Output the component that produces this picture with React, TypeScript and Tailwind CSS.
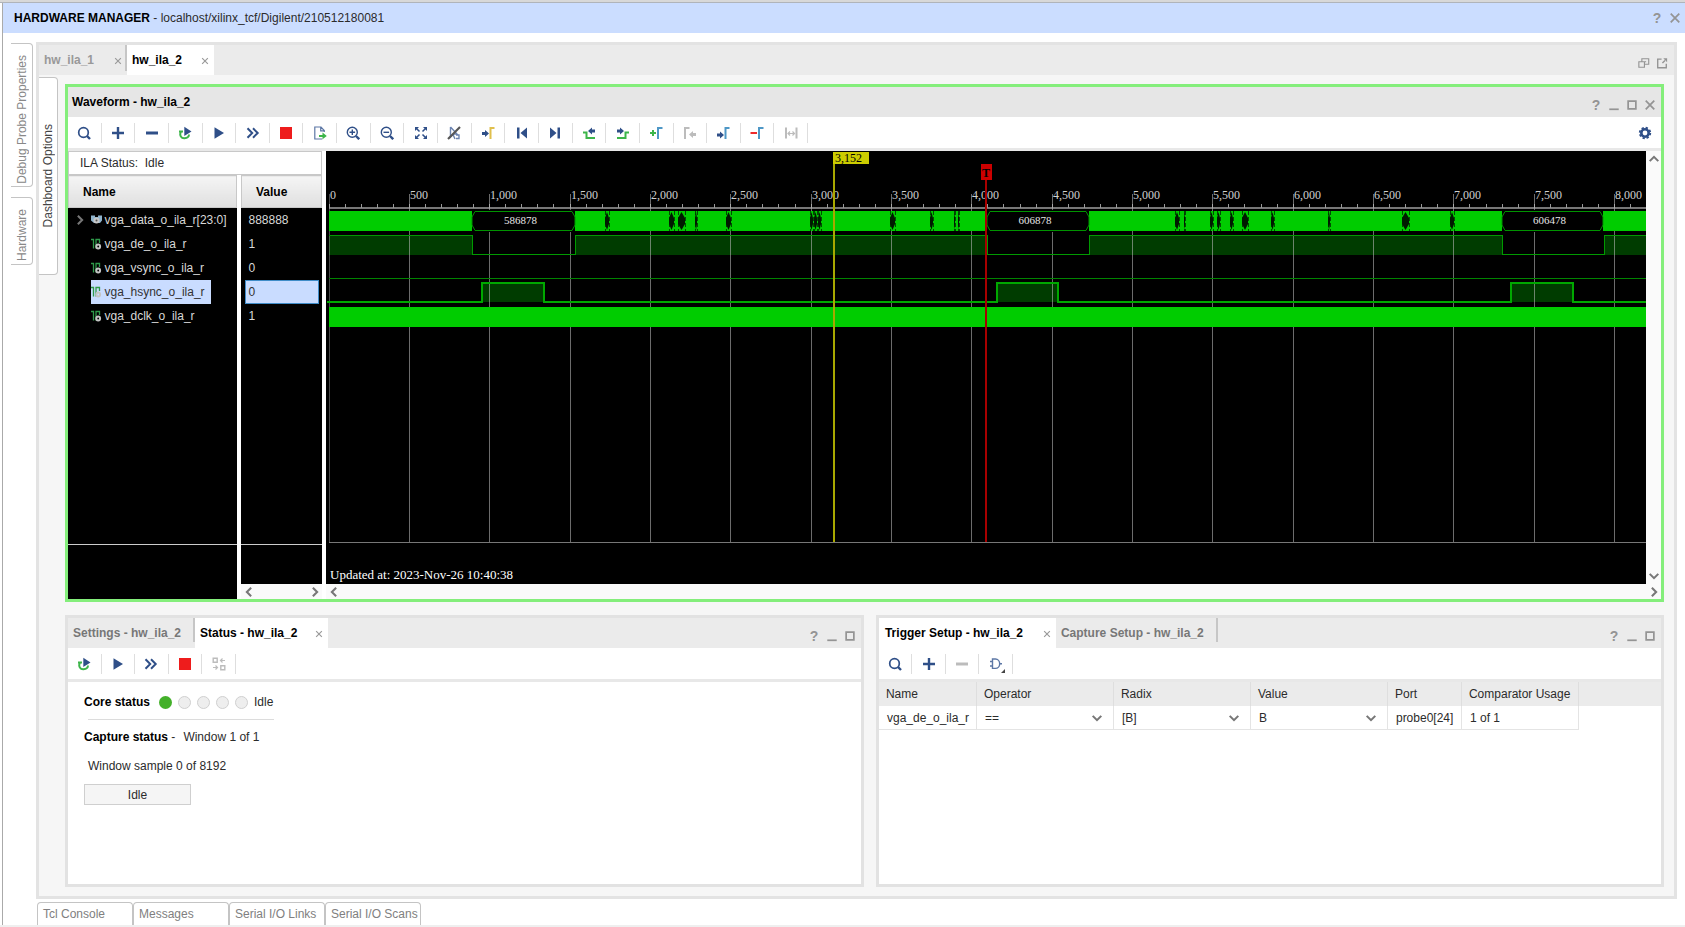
import type { ReactNode } from 'react';
import clsx from 'clsx';

const NAVY = '#2f4f88';
const GREEN = '#3db54a';
const BLUE = '#4e97c6';
const GREY = '#bcbcbc';

type IconProps = { children: ReactNode; size?: number };

const Icon = ({ children, size = 14 }: IconProps) => (
  <svg width={size} height={size} viewBox="0 0 14 14" fill="none" aria-hidden="true">
    {children}
  </svg>
);

const ArrowRight = ({ x, y, color = NAVY }: { x: number; y: number; color?: string }) => (
  <path d={`M${x} ${y - 1.5}h3v-2l4 3.5l-4 3.5v-2h-3z`} fill={color} />
);

const ArrowLeft = ({ x, y, color = NAVY }: { x: number; y: number; color?: string }) => (
  <path d={`M${x} ${y - 1.5}h-3v-2l-4 3.5l4 3.5v-2h3z`} fill={color} />
);

const SearchIcon = () => (
  <Icon>
    <circle cx="6.5" cy="6.5" r="4.8" stroke={NAVY} strokeWidth="1.7" />
    <path d="M10 10l3 3" stroke={NAVY} strokeWidth="2.4" />
  </Icon>
);

const PlusIcon = () => (
  <Icon>
    <path d="M7 1v12M1 7h12" stroke={NAVY} strokeWidth="2.4" />
  </Icon>
);

const MinusIcon = ({ color = NAVY }: { color?: string }) => (
  <Icon>
    <path d="M1 7h12" stroke={color} strokeWidth="3" />
  </Icon>
);

const RestartIcon = () => (
  <Icon>
    <path d="M1 5.5H5M3 5.5C0.8 9.5 3.5 12.4 6.5 12.2C9.500 12 11 10.500 11 8.500" stroke={GREEN} strokeWidth="1.9" />
    <path d="M6.300 0.800L13.500 5.500L6.300 10z" fill={NAVY} />
  </Icon>
);

const PlayIcon = () => (
  <Icon>
    <path d="M2.500 1.300L12 7L2.500 12.700z" fill={NAVY} />
  </Icon>
);

const ForwardIcon = () => (
  <Icon>
    <path d="M1.500 2.300L6.200 7L1.500 11.700M7 2.300L11.700 7L7 11.700" stroke={NAVY} strokeWidth="2" />
  </Icon>
);

const StopIcon = () => (
  <Icon>
    <path d="M1 1h12v12H1z" fill="#ee1c1c" />
  </Icon>
);

const ExportIcon = () => (
  <Icon>
    <path d="M11.300 6V4.500L8 1H1.800v12h7.500M7.700 1v3.800h3.600" stroke="#5c77a5" strokeWidth="1.2" />
    <path d="M6 9h3.500V6.500L13.800 10L9.500 13.300V11H6z" fill={GREEN} />
  </Icon>
);

const ZoomIcon = ({ plus = false }: { plus?: boolean }) => (
  <Icon>
    <circle cx="6.300" cy="6.300" r="5" stroke={NAVY} strokeWidth="1.400" />
    <path d={plus ? 'M3.5 6.3h5.600M6.300 3.500v5.600' : 'M3.500 6.300h5.600'} stroke={NAVY} strokeWidth="1.400" />
    <path d="M10 10l3.200 3.200" stroke={NAVY} strokeWidth="2.400" />
  </Icon>
);

const FitIcon = () => (
  <Icon>
    <path d="M1 1h4L1 5zM13 1v4L9 1zM1 13V9l4 4zM13 13H9l4-4z" fill={NAVY} />
    <path d="M2 2l3.500 3.500M12 2L8.500 5.500M2 12l3.500-3.500M12 12L8.500 8.500" stroke={NAVY} strokeWidth="1.500" />
  </Icon>
);

const NoSnapIcon = () => (
  <Icon>
    <path d="M3.500 1v10l2.500-2.500l2 4.500M3.500 1L10 8H6M9 9h3v3.500H9" stroke="#6b83b0" strokeWidth="1.400" />
    <path d="M1 13L13 1" stroke="#555" strokeWidth="2.200" />
  </Icon>
);

const CursorIcon = () => (
  <Icon>
    <ArrowRight x={1} y={7.5} />
    <path d="M9.500 13V2H13.500" stroke="#e0bf4c" strokeWidth="2" />
  </Icon>
);

const FirstIcon = () => (
  <Icon>
    <path d="M2 1.500h2.500v11H2zM12 1.500v11L5.500 7z" fill={NAVY} />
  </Icon>
);

const LastIcon = () => (
  <Icon>
    <path d="M9.500 1.500H12v11H9.500zM2 1.500v11L8.500 7z" fill={NAVY} />
  </Icon>
);

const PrevEdgeIcon = () => (
  <Icon>
    <path d="M1 6.500h3.500V12H13" stroke={GREEN} strokeWidth="2" />
    <ArrowLeft x={13} y={5} />
  </Icon>
);

const NextEdgeIcon = () => (
  <Icon>
    <path d="M1 12h8.500V6.500H13" stroke={GREEN} strokeWidth="2" />
    <ArrowRight x={1} y={5} />
  </Icon>
);

const AddMarkerIcon = () => (
  <Icon>
    <path d="M1 7h6M4 4v6" stroke={GREEN} strokeWidth="2" />
    <path d="M9 13V2H13.500" stroke={BLUE} strokeWidth="2" />
  </Icon>
);

const PrevMarkerIcon = () => (
  <Icon>
    <path d="M2 13V2H6.500" stroke={GREY} strokeWidth="2" />
    <ArrowLeft x={13} y={8.5} color={GREY} />
  </Icon>
);

const NextMarkerIcon = () => (
  <Icon>
    <ArrowRight x={1} y={9} />
    <path d="M9.500 13V2H13.500" stroke={BLUE} strokeWidth="2" />
  </Icon>
);

const RemoveMarkerIcon = () => (
  <Icon>
    <path d="M0.500 7H7" stroke="#ee2a2a" strokeWidth="2" />
    <path d="M9 13V2H13.500" stroke={BLUE} strokeWidth="2" />
  </Icon>
);

const SpanIcon = () => (
  <Icon>
    <path d="M2 1.500v11M12.500 1.500v11" stroke={GREY} strokeWidth="2" />
    <path d="M4 7.500H10.500M6 5.500l-2 2l2 2M8.500 5.500l2 2l-2 2" stroke={GREY} strokeWidth="1.200" />
  </Icon>
);

const SwapIcon = () => (
  <Icon>
    <path d="M1.200 1.200h4v4h-4zM8.800 8.800h4v4h-4z" stroke={GREY} strokeWidth="1.400" />
    <path d="M13 3.500H8.500M10.500 1.500l-2 2l2 2M1 10.500h4.500M3.500 8.500l2 2l-2 2" stroke={GREY} strokeWidth="1.200" />
  </Icon>
);

const GateIcon = () => (
  <svg width="18" height="18" viewBox="0 0 18 18" fill="none" aria-hidden="true">
    <path d="M5.500 4h3a4.200 4.700 0 0 1 0 9.400H5.500zM3 6.500h2.500M3 11h2.500M12.500 8.700h2.500" stroke="#5c77a5" strokeWidth="1.400" />
    <path d="M18 14v4h-4z" fill="#444" />
  </svg>
);

const GearIcon = () => (
  <Icon>
    <circle cx="7" cy="7" r="3.700" stroke={NAVY} strokeWidth="2.600" />
    <circle cx="7" cy="7" r="5.300" stroke={NAVY} strokeWidth="1.800" strokeDasharray="2.300 1.863" />
  </Icon>
);

const HelpIcon = () => <span className="text-sm leading-none font-bold">?</span>;

const CloseIcon = ({ size = 12 }: { size?: number }) => (
  <Icon size={size}>
    <path d="M2 2l10 10M12 2L2 12" stroke="currentColor" strokeWidth="2" />
  </Icon>
);

const MinimizeIcon = () => (
  <Icon size={12}>
    <path d="M1.500 12h11" stroke="currentColor" strokeWidth="2" />
  </Icon>
);

const MaximizeIcon = () => (
  <Icon size={12}>
    <path d="M2.500 2.500h9v9h-9z" stroke="currentColor" strokeWidth="2" />
  </Icon>
);

const RestoreIcon = () => (
  <Icon size={12}>
    <path d="M1 5.500h6.500V12H1zM4.500 5.500V2H12.500v6.500H7.500M7.500 5.500h2" stroke="currentColor" strokeWidth="1.300" />
  </Icon>
);

const FloatIcon = () => (
  <Icon size={12}>
    <path d="M6.500 2.500H2v10h10V8M7.500 7l3-3" stroke="currentColor" strokeWidth="1.600" />
    <path d="M8.500 1.500H13V6z" fill="currentColor" />
  </Icon>
);

const CHEVRONS = {
  left: 'M9.500 2L4.500 7L9.500 12',
  right: 'M4.500 2L9.500 7L4.500 12',
  up: 'M2 9.500L7 4.500L12 9.500',
  down: 'M2 4.500L7 9.500L12 4.500',
};

const Chevron = ({ dir }: { dir: keyof typeof CHEVRONS }) => (
  <svg width="12" height="12" viewBox="0 0 14 14" fill="none" stroke="#777" strokeWidth="2.400" aria-hidden="true">
    <path d={CHEVRONS[dir]} />
  </svg>
);

const BusIcon = () => (
  <svg width="11" height="12" viewBox="0 0 11 12" aria-hidden="true">
    <path d="M0 1.500h4v1.500h3V1.500h4v5L9 9H3L0 6.500z" fill="#8fb3cc" />
    <circle cx="5.500" cy="6.500" r="3" fill="#c8c8c8" />
    <circle cx="5.500" cy="6.500" r="1" fill="#555" />
  </svg>
);

const SignalIcon = () => (
  <svg width="11" height="12" viewBox="0 0 11 12" fill="none" aria-hidden="true">
    <path d="M0 1.500h2.500v9M5 10.500v-9h3.500V5" stroke="#2f9a4a" strokeWidth="1.300" />
    <circle cx="7.200" cy="8.500" r="1.900" stroke="#c4c4c4" strokeWidth="2" />
  </svg>
);

type Tool = { label: string; icon: ReactNode };

const WAVE_TOOLS: Tool[] = [
  { label: 'Search', icon: <SearchIcon /> },
  { label: 'Add probes', icon: <PlusIcon /> },
  { label: 'Remove selected', icon: <MinusIcon /> },
  { label: 'Auto re-trigger', icon: <RestartIcon /> },
  { label: 'Run trigger', icon: <PlayIcon /> },
  { label: 'Run trigger immediate', icon: <ForwardIcon /> },
  { label: 'Stop trigger', icon: <StopIcon /> },
  { label: 'Export ILA data', icon: <ExportIcon /> },
  { label: 'Zoom in', icon: <ZoomIcon plus /> },
  { label: 'Zoom out', icon: <ZoomIcon /> },
  { label: 'Zoom fit', icon: <FitIcon /> },
  { label: 'Snap to transition', icon: <NoSnapIcon /> },
  { label: 'Go to cursor', icon: <CursorIcon /> },
  { label: 'Go to start', icon: <FirstIcon /> },
  { label: 'Go to end', icon: <LastIcon /> },
  { label: 'Previous transition', icon: <PrevEdgeIcon /> },
  { label: 'Next transition', icon: <NextEdgeIcon /> },
  { label: 'Add marker', icon: <AddMarkerIcon /> },
  { label: 'Previous marker', icon: <PrevMarkerIcon /> },
  { label: 'Next marker', icon: <NextMarkerIcon /> },
  { label: 'Delete marker', icon: <RemoveMarkerIcon /> },
  { label: 'Swap cursors', icon: <SpanIcon /> },
];

const STATUS_TOOLS: Tool[] = [
  { label: 'Auto re-trigger', icon: <RestartIcon /> },
  { label: 'Run trigger', icon: <PlayIcon /> },
  { label: 'Run trigger immediate', icon: <ForwardIcon /> },
  { label: 'Stop trigger', icon: <StopIcon /> },
  { label: 'Toggle layout', icon: <SwapIcon /> },
];

const TRIGGER_TOOLS: Tool[] = [
  { label: 'Search', icon: <SearchIcon /> },
  { label: 'Add probe', icon: <PlusIcon /> },
  { label: 'Remove probe', icon: <MinusIcon color={GREY} /> },
  { label: 'Trigger condition', icon: <GateIcon /> },
];

const Toolbar = ({ tools, width, children }: { tools: Tool[]; width: string; children?: ReactNode }) => (
  <div className="flex h-[34px] shrink-0 items-center justify-between border-b-[3px] border-[#e8e8e8] bg-white pr-2">
    <div className={clsx('flex', width)}>
      {tools.map((tool) => (
        <button
          key={tool.label}
          type="button"
          aria-label={tool.label}
          className="flex h-5 flex-1 items-center justify-center border-r border-[#dedede]"
        >
          {tool.icon}
        </button>
      ))}
    </div>
    {children}
  </div>
);

type Control = 'help' | 'min' | 'max' | 'close' | 'restore' | 'float';

const CONTROL_ICONS: Record<Control, ReactNode> = {
  help: <HelpIcon />,
  min: <MinimizeIcon />,
  max: <MaximizeIcon />,
  close: <CloseIcon />,
  restore: <RestoreIcon />,
  float: <FloatIcon />,
};

const WindowControls = ({ controls }: { controls: Control[] }) => (
  <div className="flex gap-[6px] text-[#949494]">
    {controls.map((name) => (
      <button key={name} type="button" aria-label={name} className="flex size-3 items-center justify-center">
        {CONTROL_ICONS[name]}
      </button>
    ))}
  </div>
);

const CloseTab = () => (
  <button type="button" aria-label="Close tab" className="pt-px text-[#999]">
    <CloseIcon size={8} />
  </button>
);

// waveform drawing: x grows with the sample number, y is local to the plot
const PX_PER_SAMPLE = 0.1607;
const X0 = 3;
const PLOT_END = 4000;
const GRID_BOTTOM = 391;

const sampleX = (sample: number) => Math.floor(X0 + sample * PX_PER_SAMPLE);

const MAJOR_TICKS = Array.from({ length: 17 }, (_, i) => i * 500);
const MINOR_TICKS = Array.from({ length: 82 }, (_, i) => i * 100);

const BLANKING = [
  { from: 146, to: 249, value: '586878' },
  { from: 661, to: 763, value: '606878' },
  { from: 1176, to: 1277, value: '606478' },
];

const HSYNC_PULSES = [
  [156, 218],
  [671, 732],
  [1185, 1247],
];

const GLITCHES = [
  [279, 4],
  [343, 5],
  [352, 7],
  [369, 2],
  [400, 5],
  [484, 3],
  [488, 3],
  [492, 3],
  [564, 5],
  [604, 3],
  [628, 1],
  [632, 1],
  [849, 4],
  [858, 1],
  [884, 3],
  [891, 3],
  [904, 3],
  [916, 6],
  [945, 3],
  [1002, 2],
  [1076, 7],
  [1124, 4],
];

const dePath = `M3 84H146V103H249V84H661V103H763V84H1176V103H1278V84H${PLOT_END}`;
const hsyncPath =
  'M1 151' + HSYNC_PULSES.map(([from, to]) => `H${from}V132H${to}V151`).join('') + `H${PLOT_END}`;

const WavePlot = () => (
  <svg
    role="img"
    aria-label="Captured waveform"
    className="h-[433px] w-full bg-black font-['Liberation_Serif',serif] text-xs"
    shapeRendering="crispEdges"
  >
    <path d={`M${X0} 57H${PLOT_END}`} stroke="#777" strokeWidth="2" />
    {MINOR_TICKS.map((tick) => (
      <rect key={tick} x={sampleX(tick)} y="53" width="1" height="4" fill="#999" />
    ))}
    {MAJOR_TICKS.map((tick) => (
      <text key={tick} x={sampleX(tick) + 1} y="48" fill="#d0d0d0">
        {tick.toLocaleString('en-US')}
      </text>
    ))}

    {/* data enable and hsync fills sit under the grid */}
    <path d="M3 84H146V104H3zM249 84H661V104H249zM763 84H1176V104H763z" fill="#003c00" />
    <rect x="1278" y="84" width={PLOT_END} height="20" fill="#003c00" />
    {HSYNC_PULSES.map(([from, to]) => (
      <rect key={from} x={from} y="132" width={to - from} height="19" fill="#003c00" />
    ))}
    {MAJOR_TICKS.map((tick) => (
      <rect
        key={tick}
        x={sampleX(tick)}
        y="43"
        width="1"
        height={GRID_BOTTOM - 43}
        fill="#b4b4b4"
        fillOpacity={tick === 0 ? 0.4 : 0.6}
      />
    ))}
    <rect x={X0} y={GRID_BOTTOM} width={PLOT_END} height="1" fill="#777" />

    <rect x={X0} y="60" width={PLOT_END} height="20" fill="#00cc00" />
    {GLITCHES.map(([x, width]) => (
      <g key={x}>
        <path
          d={`M${x} 60v20M${x + width} 60v20`}
          stroke="#004d00"
          strokeWidth="1"
          strokeDasharray="4 2"
        />
        <path
          d={`M${x + width / 2} 61L${x + width} 67V73L${x + width / 2} 79L${x} 73V67z`}
          fill="#001a00"
          shapeRendering="auto"
        />
      </g>
    ))}
    {BLANKING.map(({ from, to, value }) => (
      <g key={value}>
        <rect x={from} y="59" width={to - from} height="22" fill="#000" />
        <path
          d={`M${from + 3} 60.5H${to - 3}L${to} 66V74L${to - 3} 79.5H${from + 3}L${from} 74V66z`}
          fill="none"
          stroke="#009400"
          shapeRendering="auto"
        />
        <text x={(from + to) / 2 - 3} y="73" textAnchor="middle" fill="#e6e6e6" className="text-[11px]">
          {value}
        </text>
      </g>
    ))}

    <path d={dePath} fill="none" stroke="#009a00" />
    <path d={`M3 127H${PLOT_END}`} stroke="#008400" />
    <path d={hsyncPath} fill="none" stroke="#00a800" strokeWidth="2" />
    <rect x={X0} y="156" width={PLOT_END} height="20" fill="#00cc00" />

    <rect x="659" y="29" width="2" height={GRID_BOTTOM - 29} fill="#a80000" />
    <rect x="655" y="13" width="11" height="16" fill="#cc0000" />
    <text x="660" y="26" textAnchor="middle" className="font-bold">
      T
    </text>
    <rect x="507" y="1" width="2" height={GRID_BOTTOM - 1} fill="#a8a800" />
    <rect x="507" y="1" width="36" height="12" fill="#cccc00" />
    <text x="509" y="11">3,152</text>

    <text x="4" y="428" fill="#fff" className="text-[13px]">
      Updated at: 2023-Nov-26 10:40:38
    </text>
  </svg>
);

type Signal = { name: string; value: string; bus?: boolean; selected?: boolean };

const SIGNALS: Signal[] = [
  { name: 'vga_data_o_ila_r[23:0]', value: '888888', bus: true },
  { name: 'vga_de_o_ila_r', value: '1' },
  { name: 'vga_vsync_o_ila_r', value: '0' },
  { name: 'vga_hsync_o_ila_r', value: '0', selected: true },
  { name: 'vga_dclk_o_ila_r', value: '1' },
];

const HEAD_CELL = 'h-8 border border-[#c8c8c8] bg-linear-to-b from-[#f5f5f5] to-[#dfdfdf] p-0 text-left font-bold text-black';

const NameColumn = () => (
  <div className="flex w-[169px] flex-col bg-black text-[#d8d8d8]">
    <table className="w-full border-collapse">
      <thead>
        <tr>
          <th className={clsx(HEAD_CELL, 'pl-[14px]')}>Name</th>
        </tr>
      </thead>
      <tbody>
        {SIGNALS.map((signal) => (
          <tr key={signal.name}>
            <td className="h-6 p-0">
              <div className="flex items-center">
                <span className="flex w-[22px] justify-center">
                  {signal.bus && (
                    <button type="button" aria-label="Expand bus" className="flex">
                      <Chevron dir="right" />
                    </button>
                  )}
                </span>
                <span
                  className={clsx(
                    'flex h-6 items-center gap-[3px] whitespace-nowrap',
                    signal.selected && 'w-[120px] bg-[#c9dcff] text-[#333]',
                  )}
                >
                  {signal.bus ? <BusIcon /> : <SignalIcon />}
                  {signal.name}
                </span>
              </div>
            </td>
          </tr>
        ))}
      </tbody>
    </table>
    <div className="h-[217px] border-b border-[#ccc]" />
  </div>
);

const ValueColumn = () => (
  <div className="flex w-[81px] flex-col bg-black text-[#d8d8d8]">
    <table className="w-full border-collapse">
      <thead>
        <tr>
          <th className={clsx(HEAD_CELL, 'pl-[14px]')}>Value</th>
        </tr>
      </thead>
      <tbody>
        {SIGNALS.map((signal) => (
          <tr key={signal.name}>
            <td className="h-6 px-[3px] py-0">
              <div
                className={clsx(
                  'flex h-6 items-center border px-[3px]',
                  signal.selected ? 'border-[#3f8cc8] bg-[#c9dcff] text-[#333]' : 'border-transparent',
                )}
              >
                {signal.value}
              </div>
            </td>
          </tr>
        ))}
      </tbody>
    </table>
    <div className="h-[217px] border-b border-[#ccc]" />
    <div className="mt-auto flex h-[15px] items-center justify-between bg-[#fafafa]">
      <button type="button" aria-label="Scroll values left" className="px-[2px]">
        <Chevron dir="left" />
      </button>
      <button type="button" aria-label="Scroll values right" className="px-px">
        <Chevron dir="right" />
      </button>
    </div>
  </div>
);

const WaveformPanel = () => (
  <section className="border-[3px] border-[#84ee7b] bg-white">
    <header className="flex h-[30px] items-center justify-between bg-[#e6e6e6] pr-[5px] pl-1">
      <h2 className="font-bold text-black">Waveform - hw_ila_2</h2>
      <div className="pt-[6px]">
        <WindowControls controls={['help', 'min', 'max', 'close']} />
      </div>
    </header>
    <Toolbar tools={WAVE_TOOLS} width="w-[740px]">
      <button type="button" aria-label="Settings" className="pr-px">
        <GearIcon />
      </button>
    </Toolbar>
    <div className="flex gap-1">
      <div className="flex w-[254px] shrink-0 flex-col">
        <div className="flex h-6 items-center border border-[#c8c8c8] pl-[11px]">
          ILA Status:&nbsp; Idle
        </div>
        <div className="flex flex-1 gap-1">
          <NameColumn />
          <ValueColumn />
        </div>
      </div>
      <div className="min-w-0 flex-1">
        <div className="flex">
          <div className="min-w-0 flex-1">
            <WavePlot />
          </div>
          <div className="flex w-[15px] flex-col items-center justify-between bg-[#fafafa] py-[2px]">
            <button type="button" aria-label="Scroll up">
              <Chevron dir="up" />
            </button>
            <button type="button" aria-label="Scroll down">
              <Chevron dir="down" />
            </button>
          </div>
        </div>
        <div className="flex h-[15px] items-center justify-between bg-[#fafafa]">
          <button type="button" aria-label="Scroll left" className="px-[2px]">
            <Chevron dir="left" />
          </button>
          <button type="button" aria-label="Scroll right" className="px-px">
            <Chevron dir="right" />
          </button>
        </div>
      </div>
    </div>
  </section>
);

const StatusPanel = () => (
  <section className="flex flex-[799] flex-col border-[3px] border-[#e2e2e2] bg-white">
    <header className="flex h-[30px] justify-between bg-[#ebebeb] pr-[5px]">
      <div className="flex">
        <button type="button" className="w-[125px] pl-[5px] text-left font-bold text-[#777]">
          Settings - hw_ila_2
        </button>
        <span className="h-6 w-[2px] bg-[#c6c6c6]" />
        <div className="flex w-[133px] items-center justify-between bg-white pr-[5px] pl-[5px]">
          <button type="button" className="font-bold text-black">
            Status - hw_ila_2
          </button>
          <CloseTab />
        </div>
      </div>
      <div className="pt-3">
        <WindowControls controls={['help', 'min', 'max']} />
      </div>
    </header>
    <Toolbar tools={STATUS_TOOLS} width="w-[168px]" />
    <div className="flex flex-col items-start px-4">
      <div className="flex h-[37px] items-center gap-[6px] pt-[3px]">
        <span className="w-[69px] font-bold text-black">Core status</span>
        <span className="size-[13px] rounded-full bg-[#43b02a]" />
        {[1, 2, 3, 4].map((step) => (
          <span key={step} className="size-[13px] rounded-full border border-[#d0d0d0] bg-[#eee]" />
        ))}
        <span>Idle</span>
      </div>
      <div className="ml-1 w-[186px] border-b border-[#dcdcdc]" />
      <div className="flex h-[34px] items-center gap-2">
        <span>
          <b className="text-black">Capture status</b> -
        </span>
        <span>Window 1 of 1</span>
      </div>
      <p className="flex h-6 items-center pl-1">Window sample 0 of 8192</p>
      <div className="mt-[6px] flex h-[21px] w-[107px] items-center justify-center border border-[#cfcfcf] bg-[#f5f5f5]">
        Idle
      </div>
    </div>
  </section>
);

const PROBE_SELECTS = [
  { label: 'Operator', value: '==' },
  { label: 'Radix', value: '[B]' },
  { label: 'Value', value: 'B' },
];

const TH = 'h-6 border-r border-[#dedede] px-[7px] text-left font-normal';
const TD = 'h-6 border-r border-b border-[#e4e4e4] px-2';

const TriggerPanel = () => (
  <section className="flex flex-[788] flex-col border-[3px] border-[#e2e2e2] bg-white">
    <header className="flex h-[30px] justify-between bg-[#ebebeb] pr-[5px]">
      <div className="flex">
        <div className="flex w-[177px] items-center justify-between bg-white pr-[5px] pl-[6px]">
          <button type="button" className="font-bold text-black">
            Trigger Setup - hw_ila_2
          </button>
          <CloseTab />
        </div>
        <button type="button" className="w-[160px] pl-[5px] text-left font-bold text-[#777]">
          Capture Setup - hw_ila_2
        </button>
        <span className="h-6 w-[2px] bg-[#c6c6c6]" />
      </div>
      <div className="pt-3">
        <WindowControls controls={['help', 'min', 'max']} />
      </div>
    </header>
    <Toolbar tools={TRIGGER_TOOLS} width="w-[134px]" />
    <table className="w-full table-fixed border-separate border-spacing-0">
      <thead className="bg-[#ebebeb]">
        <tr>
          <th className={clsx(TH, 'w-[98px]')}>Name</th>
          <th className={clsx(TH, 'w-[137px]')}>Operator</th>
          <th className={clsx(TH, 'w-[137px]')}>Radix</th>
          <th className={clsx(TH, 'w-[137px]')}>Value</th>
          <th className={clsx(TH, 'w-[74px]')}>Port</th>
          <th className={clsx(TH, 'w-[117px]')}>Comparator Usage</th>
          <th />
        </tr>
      </thead>
      <tbody>
        <tr>
          <td className={TD}>vga_de_o_ila_r</td>
          {PROBE_SELECTS.map((field) => (
            <td key={field.label} className={TD}>
              <div className="relative">
                <select aria-label={field.label} className="w-full appearance-none bg-transparent">
                  <option>{field.value}</option>
                </select>
                <span className="pointer-events-none absolute inset-y-0 right-[2px] flex items-center">
                  <Chevron dir="down" />
                </span>
              </div>
            </td>
          ))}
          <td className={TD}>probe0[24]</td>
          <td className={TD}>1 of 1</td>
          <td />
        </tr>
      </tbody>
    </table>
  </section>
);

const SideTab = ({ label, className }: { label: string; className: string }) => (
  <button
    type="button"
    className={clsx('flex items-center justify-center rounded-r border-y border-r border-[#c4c4c4] bg-white', className)}
  >
    <span className="rotate-180 whitespace-nowrap [writing-mode:vertical-rl]">{label}</span>
  </button>
);

const CONSOLE_TABS = ['Tcl Console', 'Messages', 'Serial I/O Links', 'Serial I/O Scans'];

const App = () => (
  <div className="flex min-h-screen flex-col bg-white font-['Liberation_Sans',Arial,sans-serif] text-xs text-[#2b2b2b]">
    <div className="h-[3px] border-b border-[#b0b4ba] bg-[#d8d8d8]" />
    <div className="flex flex-1">
      <div className="w-[3px] border-r border-[#aaa]" />
      <div className="flex min-w-0 flex-1 flex-col">
        <header className="flex h-[30px] items-center justify-between bg-[#cbddff] pr-1 pl-[11px]">
          <h1>
            <b className="text-black">HARDWARE MANAGER</b> - localhost/xilinx_tcf/Digilent/210512180081
          </h1>
          <WindowControls controls={['help', 'close']} />
        </header>

        <div className="flex flex-1 pt-[9px] pr-2">
          <nav className="flex w-[33px] flex-col gap-[10px] pt-px pr-[3px] pl-2">
            <SideTab label="Debug Probe Properties" className="h-36 pt-2 text-[#888]" />
            <SideTab label="Hardware" className="h-[68px] pt-2 text-[#888]" />
          </nav>

          <main className="flex min-w-0 flex-1 flex-col border-[3px] border-[#e3e3e3] bg-[#f6f6f6]">
            <div className="flex h-[30px] shrink-0 justify-between bg-[#ebebeb] pr-[6px]">
              <div className="flex">
                <div className="flex w-[86px] items-center justify-between pr-[3px] pl-[5px]">
                  <button type="button" className="font-bold text-[#999]">
                    hw_ila_1
                  </button>
                  <CloseTab />
                </div>
                <span className="h-[26px] w-[2px] bg-[#c6c6c6]" />
                <div className="flex w-[87px] items-center justify-between bg-white pr-[5px] pl-[5px]">
                  <button type="button" className="font-bold text-black">
                    hw_ila_2
                  </button>
                  <CloseTab />
                </div>
              </div>
              <div className="pt-3">
                <WindowControls controls={['restore', 'float']} />
              </div>
            </div>

            <div className="flex flex-1">
              <div className="w-[26px] shrink-0 pt-[2px] pr-[7px]">
                <SideTab label="Dashboard Options" className="h-[198px] w-full text-[#444]" />
              </div>
              <div className="flex min-w-0 flex-1 flex-col gap-[13px] pt-[9px] pr-[10px] pb-[9px]">
                <WaveformPanel />
                <div className="flex flex-1 gap-3">
                  <StatusPanel />
                  <TriggerPanel />
                </div>
              </div>
            </div>
          </main>
        </div>

        <nav className="flex pt-[3px] pl-[34px]">
          {CONSOLE_TABS.map((tab) => (
            <button
              key={tab}
              type="button"
              className="h-[23px] w-24 rounded-t-sm border-x border-t border-[#c4c4c4] pl-[5px] text-left whitespace-nowrap text-[#808080]"
            >
              {tab}
            </button>
          ))}
        </nav>
      </div>
    </div>
    <div className="h-[2px] bg-[#efefef]" />
  </div>
);

export default App;
